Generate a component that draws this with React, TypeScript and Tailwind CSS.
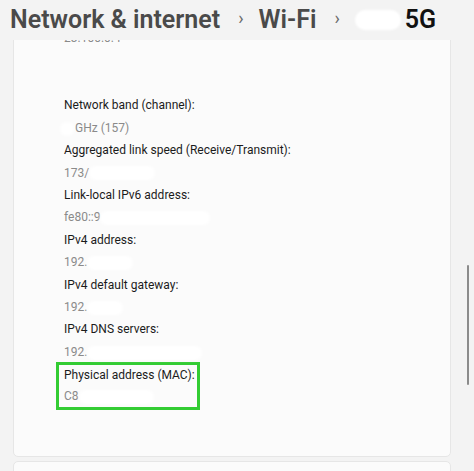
import React from 'react';

interface Field {
  label: string;
  value: string;
  blob: number;
  blobFirst?: boolean;
  highlight?: boolean;
}

const fields: Field[] = [
  { label: 'Network band (channel):', value: 'GHz (157)', blob: 14, blobFirst: true },
  { label: 'Aggregated link speed (Receive/Transmit):', value: '173/', blob: 66 },
  { label: 'Link-local IPv6 address:', value: 'fe80::9', blob: 110 },
  { label: 'IPv4 address:', value: '192.', blob: 46 },
  { label: 'IPv4 default gateway:', value: '192.', blob: 36 },
  { label: 'IPv4 DNS servers:', value: '192.', blob: 115 },
  { label: 'Physical address (MAC):', value: 'C8', blob: 75, highlight: true },
];

const Blob = ({ w }: { w: number }) => (
  <span className="inline-block h-[14px] align-middle rounded-full bg-white blur-[1.5px]" style={{ width: w }} />
);

const Chevron = () => <span className="text-[18px] font-normal text-[#6b6b6b] pl-[18px] pr-[15px] relative top-[-3px]">›</span>;

export default function App() {
  return (
    <div className="w-[474px] h-[471px] bg-[#f3f3f3] overflow-hidden relative" style={{ fontFamily: 'Roboto, "Noto Sans", sans-serif' }}>
      {/* Breadcrumb header */}
      <div className="h-[40px] pl-[10px] flex items-center text-[25px] font-semibold whitespace-nowrap">
        <span className="text-[#4a4a4a]">Network &amp; internet</span>
        <Chevron />
        <span className="text-[#4a4a4a]">Wi-Fi</span>
        <Chevron />
        <span className="inline-block w-[46px] h-[20px] rounded-full bg-white blur-[1px] mr-[4px]" />
        <span className="text-[#111]">5G</span>
      </div>

      {/* Scroll area */}
      <div className="h-[431px] overflow-hidden pl-[13px] w-[451px]">
        <div className="-mt-[16px] bg-[#fbfbfb] border border-[#e6e6e6] rounded-[5px] pl-[50px] pb-[46px] text-[12px] leading-[22.4px]">
          <div className="pt-[2px] text-[#8a8a8a]">23.100.0.4</div>
          <div className="h-[45px]" />
          {fields.map((f) => {
            const body = (
              <>
                <div className="text-[#1b1b1b]">{f.label}</div>
                <div className="text-[#8a8a8a] whitespace-nowrap">
                  {f.blobFirst && <span className="-ml-[4px] mr-[1px]"><Blob w={f.blob} /></span>}
                  {f.value}
                  {!f.blobFirst && <Blob w={f.blob} />}
                </div>
              </>
            );
            return f.highlight ? (
              <div key={f.label} className="-ml-[8px] -mt-[1px] pl-[5px] w-[144px] border-[3px] border-[#33cc33] leading-[21px]">
                {body}
              </div>
            ) : (
              <div key={f.label}>{body}</div>
            );
          })}
        </div>
        <div className="mt-[4px] h-[20px] bg-[#fbfbfb] border border-[#e6e6e6] rounded-[5px]" />
      </div>

      {/* Scrollbar thumb */}
      <div className="absolute left-[467px] top-[265px] w-[2px] h-[120px] rounded-full bg-[#8b8b8b]" />
    </div>
  );
}
